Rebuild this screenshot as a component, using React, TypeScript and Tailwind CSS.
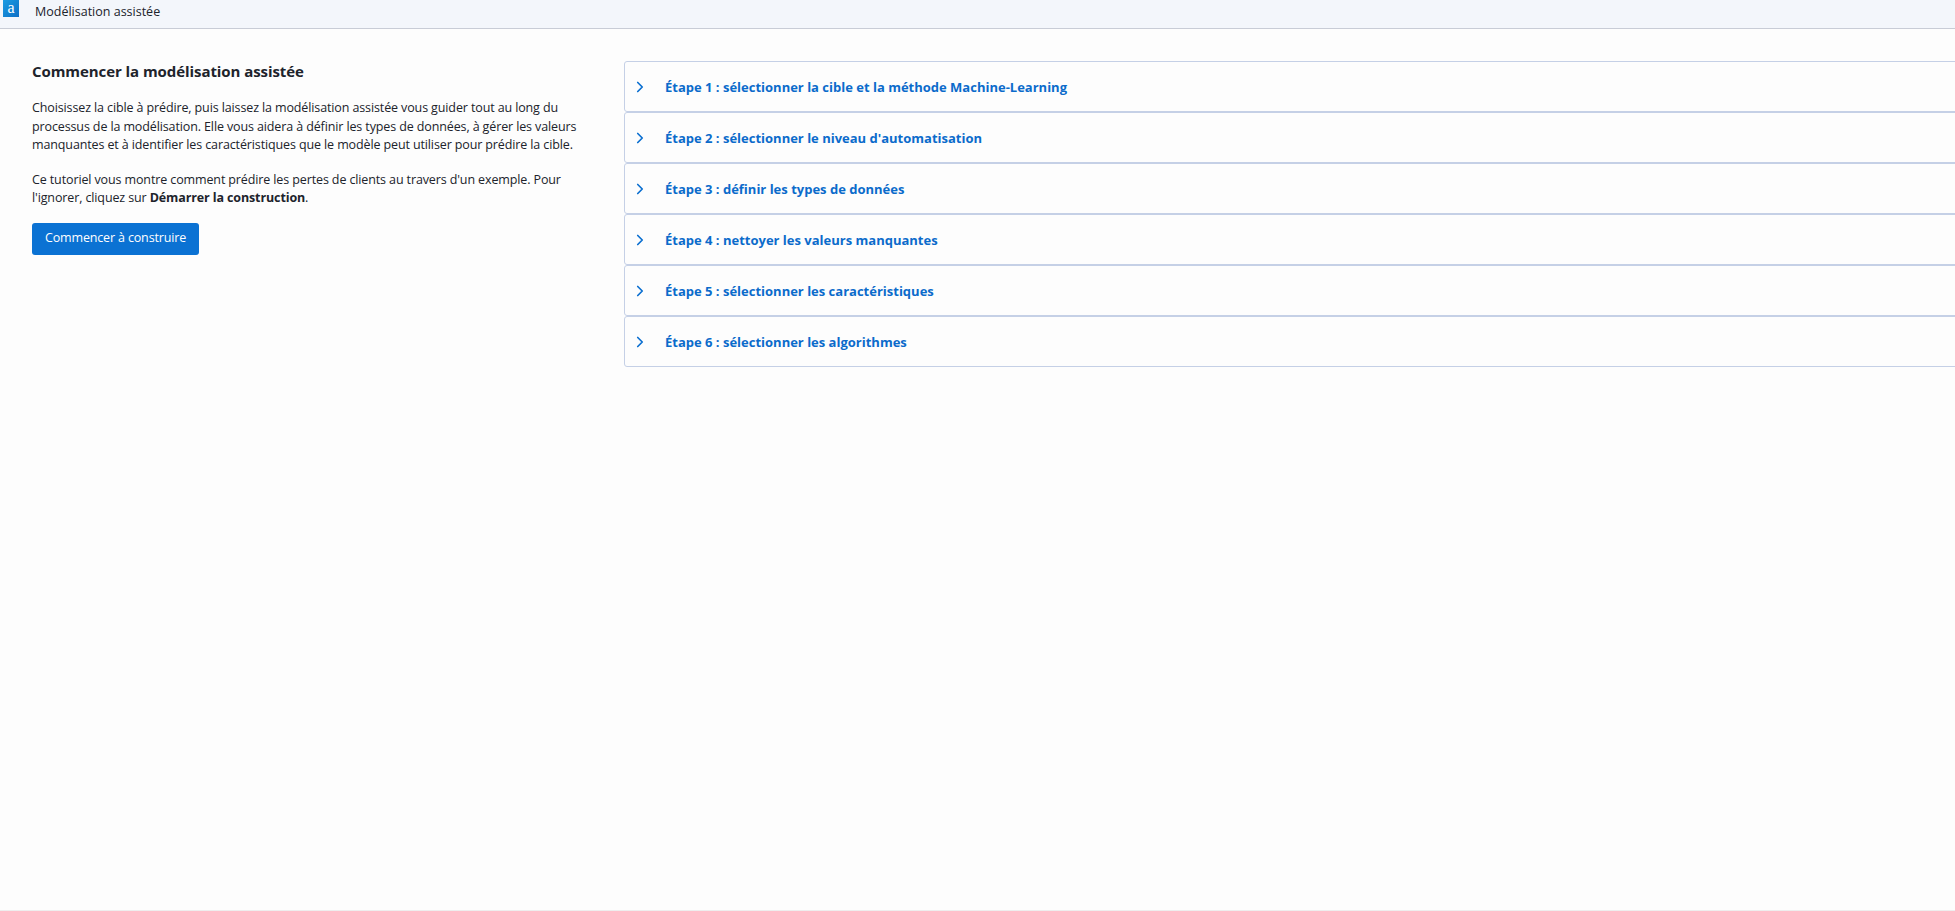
import React from "react";
import { ChevronRight } from "lucide-react";

const steps = [
  "Étape 1 : sélectionner la cible et la méthode Machine-Learning",
  "Étape 2 : sélectionner le niveau d'automatisation",
  "Étape 3 : définir les types de données",
  "Étape 4 : nettoyer les valeurs manquantes",
  "Étape 5 : sélectionner les caractéristiques",
  "Étape 6 : sélectionner les algorithmes",
];

const App = () => {
  return (
    <div className="h-[911px] w-full overflow-hidden bg-[#fdfdfd] flex flex-col font-['Open_Sans','Noto_Sans',sans-serif] text-[#20232b]">
      {/* top bar */}
      <div className="h-[29px] shrink-0 bg-[#f3f6fb] border-b border-[#c8ccd6] flex items-start">
        <div className="ml-[3px] w-4 h-[17px] bg-gradient-to-br from-[#1b9ce2] to-[#0f6fc6] text-center text-white text-[16px] leading-[15px] font-['Liberation_Serif',serif]">
          a
        </div>
        <span className="ml-4 mt-[3px] text-[12.5px] leading-[17px]">Modélisation assistée</span>
      </div>

      {/* content */}
      <div className="flex-1 flex items-start">
        {/* left area */}
        <div className="w-[624px] shrink-0 pl-8 pt-[32px]">
          <h1 className="text-[15px] leading-5 font-bold tracking-[-0.07px]">Commencer la modélisation assistée</h1>
          <p className="mt-[18px] text-[12.5px] leading-[18.5px] tracking-[-0.12px]">
            Choisissez la cible à prédire, puis laissez la modélisation assistée vous guider tout au long du
            <br />
            processus de la modélisation. Elle vous aidera à définir les types de données, à gérer les valeurs
            <br />
            manquantes et à identifier les caractéristiques que le modèle peut utiliser pour prédire la cible.
          </p>
          <p className="mt-[16px] text-[12.5px] leading-[18.5px] tracking-[-0.12px]">
            Ce tutoriel vous montre comment prédire les pertes de clients au travers d'un exemple. Pour
            <br />
            l'ignorer, cliquez sur <b className="font-bold">Démarrer la construction</b>.
          </p>
          <button className="mt-[15px] w-[167px] h-8 rounded-[3px] bg-[#0b72d3] text-white text-[12.5px] tracking-[-0.15px]">
            Commencer à construire
          </button>
        </div>

        {/* right area */}
        <div className="flex-1 -mr-1 pt-8 flex flex-col">
          {steps.map((step) => (
            <div
              key={step}
              className="h-[51px] border border-[#c5d0e6] rounded-[3px] flex items-center pl-[6px] bg-[#fdfdfd]"
            >
              <ChevronRight className="w-[18px] h-[18px] text-[#0b6fd0]" strokeWidth={2.25} />
              <span className="ml-4 pt-[2px] text-[13px] font-bold text-[#0b6bcb]">{step}</span>
            </div>
          ))}
        </div>
      </div>

      {/* bottom line */}
      <div className="h-px shrink-0 bg-[#eeeeee]" />
    </div>
  );
};

export default App;
